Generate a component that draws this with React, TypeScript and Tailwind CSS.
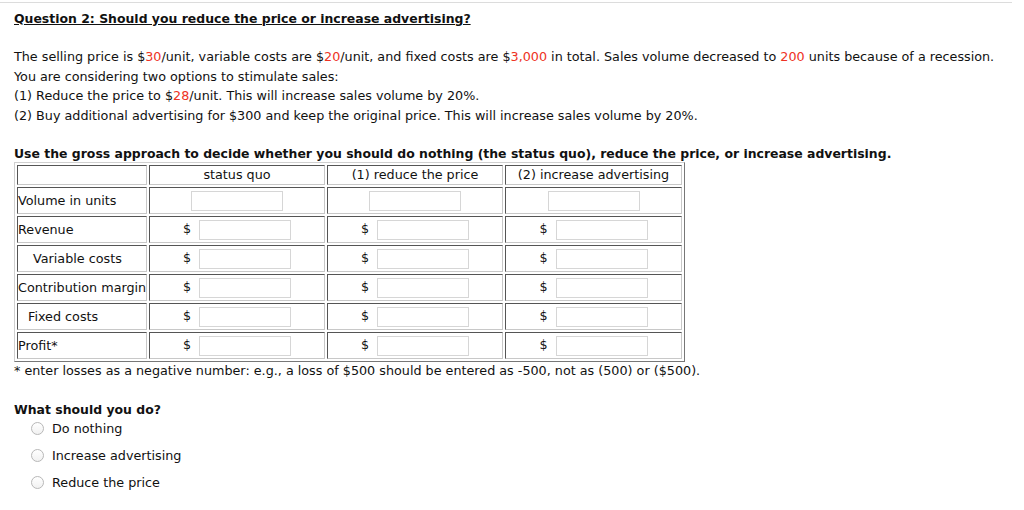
import React from 'react';

const rows = [
  { label: 'Volume in units', indent: '', dollar: false },
  { label: 'Revenue', indent: '', dollar: true },
  { label: 'Variable costs', indent: 'pl-[15px]', dollar: true },
  { label: 'Contribution margin', indent: '', dollar: true },
  { label: 'Fixed costs', indent: 'pl-[10px]', dollar: true },
  { label: 'Profit*', indent: '', dollar: true },
];

const cellBorder = 'border border-t-[#555] border-l-[#555] border-b-[#c8c8c8] border-r-[#c8c8c8]';

const Red = ({ children }: { children: React.ReactNode }) => (
  <span className="text-[#ee3224]">{children}</span>
);

const AmountCell = ({ dollar }: { dollar: boolean }) => (
  <td className={`${cellBorder} h-[27px] p-0 text-center align-middle`}>
    {dollar && <span className="mr-[8px]">$</span>}
    <input
      type="text"
      className="w-[92px] h-[20px] border border-[#d6d6d6] align-middle outline-none"
    />
  </td>
);

export default function App() {
  const options = ['Do nothing', 'Increase advertising', 'Reduce the price'];

  return (
    <div className="w-[1024px] h-[510px] bg-white text-[12.75px] text-[#111] overflow-hidden" style={{ fontFamily: '"DejaVu Sans", Verdana, sans-serif' }}>
      <div className="mx-0 mt-[2px] w-[1012px] border-t border-[#dcdcdc]" />
      <div className="px-[14px]">
        {/* Title */}
        <h2 className="mt-[6px] text-[12.45px] font-bold underline leading-[19px]">
          Question 2: Should you reduce the price or increase advertising?
        </h2>

        {/* Problem statement */}
        <div className="mt-[19px] leading-[19.5px] whitespace-nowrap">
          <p>
            The selling price is $<Red>30</Red>/unit, variable costs are $<Red>20</Red>/unit, and fixed costs are $<Red>3,000</Red> in
            total. Sales volume decreased to <Red>200</Red> units because of a recession.
          </p>
          <p>You are considering two options to stimulate sales:</p>
          <p>(1) Reduce the price to $<Red>28</Red>/unit. This will increase sales volume by 20%.</p>
          <p>(2) Buy additional advertising for $300 and keep the original price. This will increase sales volume by 20%.</p>
        </div>

        <p className="mt-[19px] text-[12.45px] font-bold leading-[19px]">
          Use the gross approach to decide whether you should do nothing (the status quo), reduce the price, or increase advertising.
        </p>

        {/* Worksheet */}
        <table className="-mt-[1px] table-fixed border-separate border-spacing-[2px] border border-t-[#d0d0d0] border-l-[#d0d0d0] border-b-[#777] border-r-[#777] w-[671px]">
          <colgroup>
            <col className="w-[130px]" />
            <col className="w-[176px]" />
            <col className="w-[176px]" />
            <col className="w-[177px]" />
          </colgroup>
          <thead>
            <tr>
              <th className={`${cellBorder} h-[20px] p-0 font-normal leading-[16px]`}></th>
              <th className={`${cellBorder} h-[20px] p-0 font-normal leading-[16px]`}>status quo</th>
              <th className={`${cellBorder} h-[20px] p-0 font-normal leading-[16px]`}>(1) reduce the price</th>
              <th className={`${cellBorder} h-[20px] p-0 font-normal leading-[16px]`}>(2) increase advertising</th>
            </tr>
          </thead>
          <tbody>
            {rows.map((r) => (
              <tr key={r.label}>
                <td className={`${cellBorder} h-[27px] p-0 whitespace-nowrap ${r.indent}`}>{r.label}</td>
                <AmountCell dollar={r.dollar} />
                <AmountCell dollar={r.dollar} />
                <AmountCell dollar={r.dollar} />
              </tr>
            ))}
          </tbody>
        </table>
        <p className="leading-[19px] -mt-[1px]">
          * enter losses as a negative number: e.g., a loss of $500 should be entered as -500, not as (500) or ($500).
        </p>

        {/* Decision */}
        <p className="mt-[20px] text-[12.45px] font-bold leading-[19px]">What should you do?</p>
        <div className="flex flex-col gap-[8px] pl-[17px]">
          {options.map((o) => (
            <label key={o} className="flex items-center gap-[8px] leading-[19px]">
              <span className="inline-block w-[13px] h-[13px] rounded-full border border-[#b8b8b8] bg-gradient-to-b from-white to-[#f1f1f1]" />
              <span>{o}</span>
            </label>
          ))}
        </div>
      </div>
    </div>
  );
}
